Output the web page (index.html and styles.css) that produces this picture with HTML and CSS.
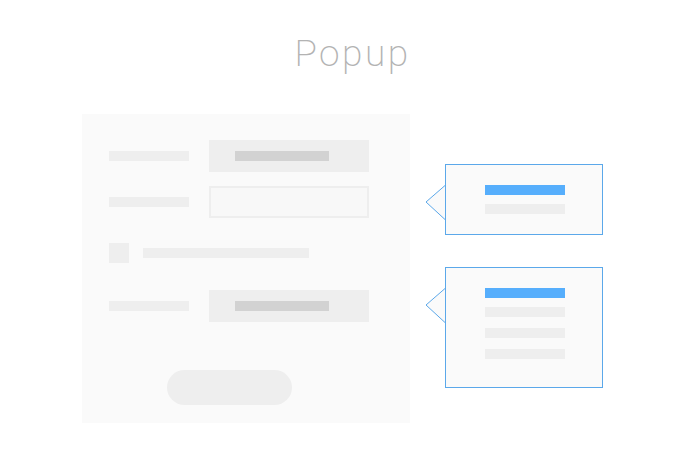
FILE: index.html
```html
<!DOCTYPE html>
<html>
<head>
<meta charset="utf-8">
<link rel="stylesheet" href="styles.css">
</head>
<body>
<div class="page">
  <h1 class="title">Popup</h1>
  <div class="stage">
    <div class="panel">
      <div class="row row-1">
        <div class="label"></div>
        <div class="field"><div class="value"></div></div>
      </div>
      <div class="row row-2">
        <div class="label"></div>
        <div class="input"></div>
      </div>
      <div class="row row-3">
        <div class="checkbox"></div>
        <div class="check-label"></div>
      </div>
      <div class="row row-4">
        <div class="label"></div>
        <div class="field"><div class="value"></div></div>
      </div>
      <div class="button"></div>
    </div>
    <div class="popups">
      <div class="popup popup-1">
        <svg class="pointer" width="21" height="36" viewBox="0 0 21 36">
          <polygon points="20,0 1,17 20,35" fill="#fafafa"/>
          <polyline points="20,0.5 1,17 20,34.5" fill="none" stroke="#5ba8ea" stroke-width="1"/>
        </svg>
        <div class="item active"></div>
        <div class="item"></div>
      </div>
      <div class="popup popup-2">
        <svg class="pointer" width="21" height="36" viewBox="0 0 21 36">
          <polygon points="20,0 1,17 20,35" fill="#fafafa"/>
          <polyline points="20,0.5 1,17 20,34.5" fill="none" stroke="#5ba8ea" stroke-width="1"/>
        </svg>
        <div class="item active"></div>
        <div class="item"></div>
        <div class="item"></div>
        <div class="item"></div>
      </div>
    </div>
  </div>
</div>
</body>
</html>
```
FILE: styles.css
```css
html, body {
  margin: 0;
  padding: 0;
  background: #ffffff;
}
.page {
  width: 700px;
  height: 460px;
  font-family: Roboto, "Liberation Sans", sans-serif;
}
.title {
  margin: 0;
  padding: 30px 0 0 5px;
  height: 114px;
  box-sizing: border-box;
  text-align: center;
  font-size: 37px;
  font-weight: 200;
  line-height: 48px;
  color: #b3b3b3;
  letter-spacing: 2.5px;
}
.stage {
  display: flex;
  align-items: flex-start;
  padding-left: 82px;
}
.panel {
  width: 328px;
  height: 309px;
  box-sizing: border-box;
  background: #fafafa;
  padding: 26px 0 0 27px;
}
.row {
  display: flex;
  align-items: center;
}
.label {
  width: 80px;
  height: 10px;
  background: #eeeeee;
  margin-right: 20px;
}
.field {
  width: 160px;
  height: 32px;
  background: #eeeeee;
  display: flex;
  align-items: center;
  padding-left: 26px;
  box-sizing: border-box;
}
.value {
  width: 94px;
  height: 10px;
  background: #d2d2d2;
}
.input {
  width: 160px;
  height: 32px;
  box-sizing: border-box;
  border: 2px solid #eeeeee;
  background: #f8f8f8;
}
.row-2 { margin-top: 14px; }
.row-3 { margin-top: 25px; }
.row-4 { margin-top: 27px; }
.checkbox {
  width: 20px;
  height: 20px;
  background: #eeeeee;
}
.check-label {
  width: 166px;
  height: 10px;
  margin-left: 14px;
  background: #eeeeee;
}
.button {
  width: 125px;
  height: 35px;
  margin: 48px 0 0 58px;
  border-radius: 18px;
  background: #eeeeee;
}
.popups {
  margin-left: 35px;
  padding-top: 50px;
  display: flex;
  flex-direction: column;
  gap: 32px;
}
.popup {
  position: relative;
  width: 158px;
  box-sizing: border-box;
  border: 1px solid #5ba8ea;
  background: #fafafa;
  padding: 20px 0 0 39px;
}
.popup-1 { height: 71px; }
.popup-2 { height: 121px; }
.pointer {
  position: absolute;
  left: -21px;
  top: 20px;
}
.item {
  width: 80px;
  height: 10px;
  background: #eeeeee;
}
.item + .item { margin-top: 9px; }
.popup-2 .item + .item { margin-top: 11px; }
.popup-2 .item.active + .item { margin-top: 9px; }
.item.active { background: #56aefc; }
```
